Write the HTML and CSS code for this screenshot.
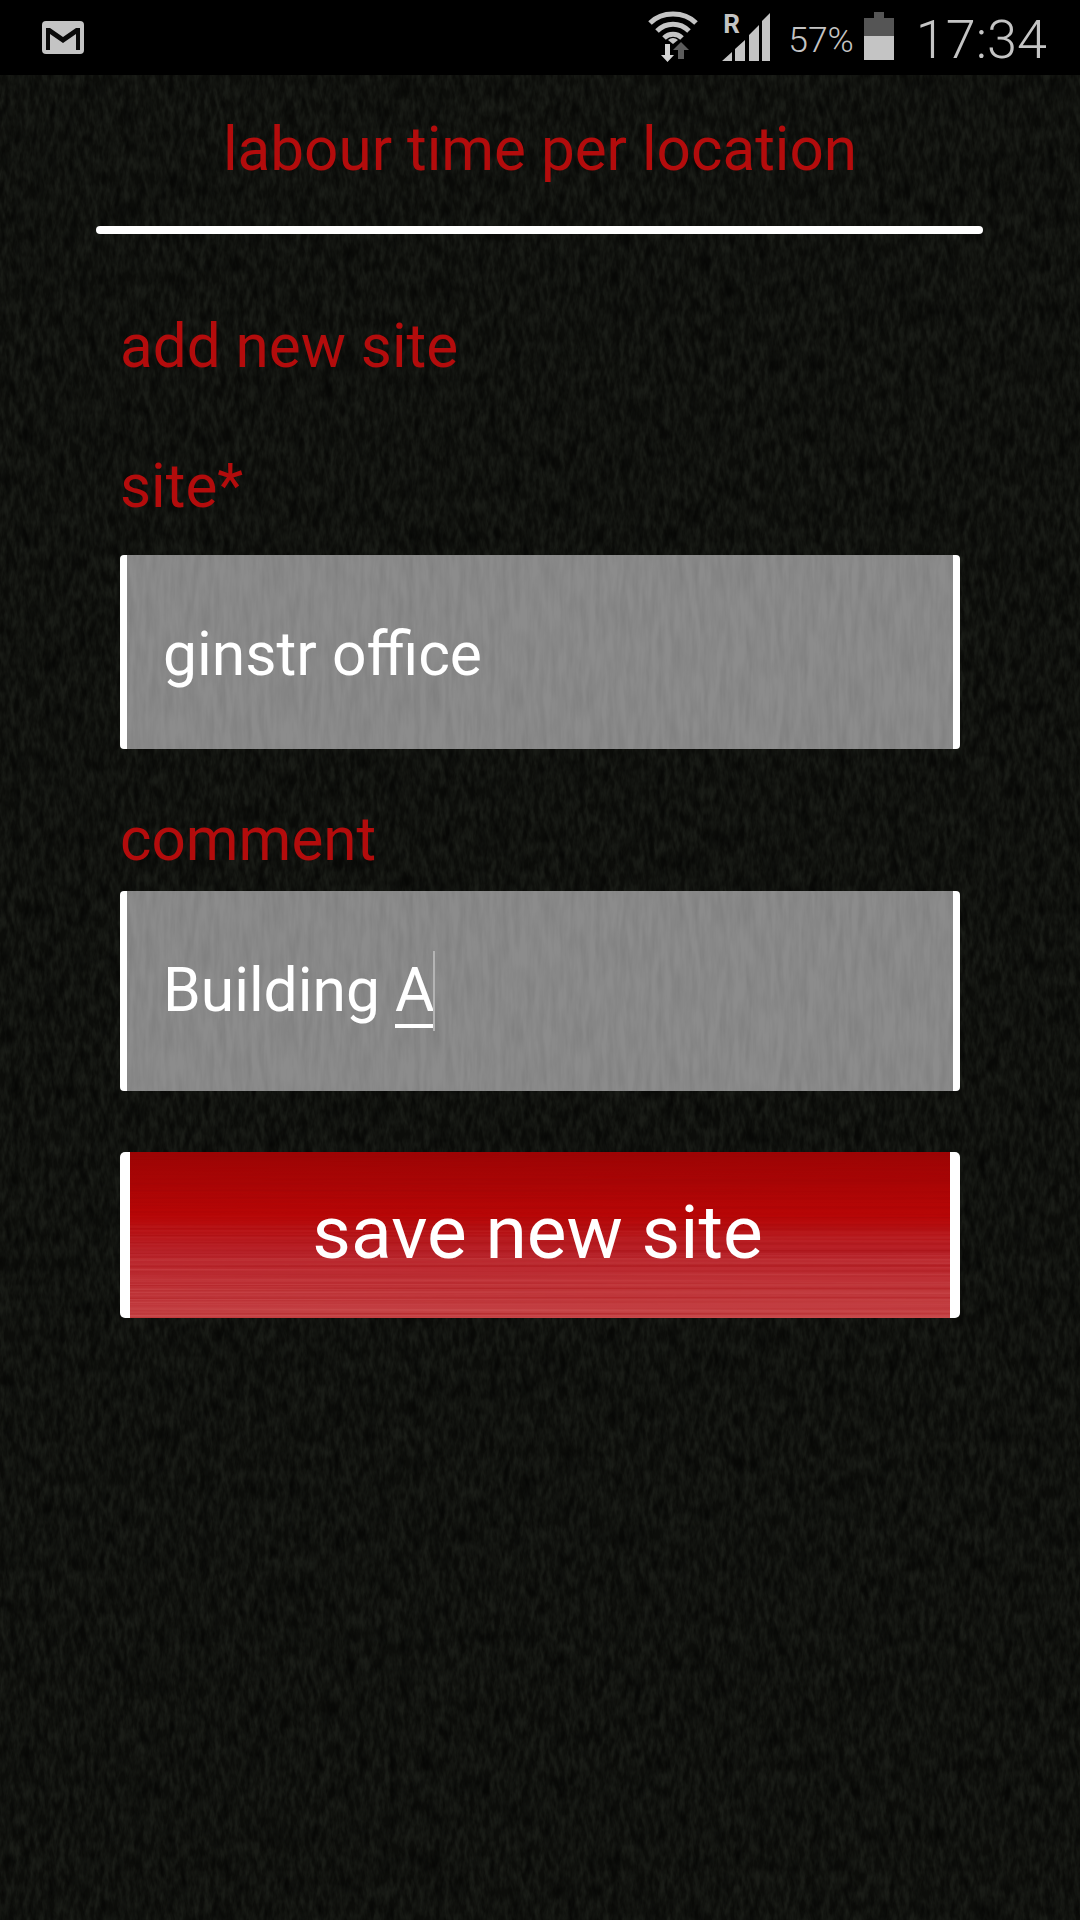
FILE: index.html
```html
<!DOCTYPE html>
<html lang="en">
<head>
<meta charset="utf-8">
<title>labour time per location</title>
<link rel="stylesheet" href="styles.css">
</head>
<body>
<svg class="defs" width="0" height="0" aria-hidden="true">
  <filter id="grain" x="0" y="0" width="100%" height="100%" color-interpolation-filters="sRGB">
    <feTurbulence type="fractalNoise" baseFrequency="0.2 0.07" numOctaves="3" seed="7"/>
    <feColorMatrix type="matrix" values="0 0 0 0 0.10  0 0 0 0 0.11  0 0 0 0 0.09  2.2 0 0 0 -0.7"/>
  </filter>
  <filter id="pits" x="0" y="0" width="100%" height="100%" color-interpolation-filters="sRGB">
    <feTurbulence type="fractalNoise" baseFrequency="0.09 0.04" numOctaves="2" seed="11"/>
    <feColorMatrix type="matrix" values="0 0 0 0 0  0 0 0 0 0  0 0 0 0 0  3 0 0 0 -1.5"/>
  </filter>
  <filter id="fibre" x="0" y="0" width="100%" height="100%" color-interpolation-filters="sRGB">
    <feTurbulence type="fractalNoise" baseFrequency="0.16 0.025" numOctaves="3" seed="3"/>
    <feColorMatrix type="matrix" values="0 0 0 0 0.47  0 0 0 0 0.47  0 0 0 0 0.47  1.0 0 0 0 -0.3"/>
  </filter>
  <filter id="brush" x="0" y="0" width="100%" height="100%" color-interpolation-filters="sRGB">
    <feTurbulence type="fractalNoise" baseFrequency="0.0008 0.42" numOctaves="2" seed="5"/>
    <feColorMatrix type="matrix" values="0 0 0 0 0.62  0 0 0 0 0.02  0 0 0 0 0.03  2.4 0 0 0 -1.0"/>
  </filter>
  <filter id="sheen" x="0" y="0" width="100%" height="100%" color-interpolation-filters="sRGB">
    <feTurbulence type="fractalNoise" baseFrequency="0.0008 0.3" numOctaves="2" seed="19"/>
    <feColorMatrix type="matrix" values="0 0 0 0 0.86  0 0 0 0 0.42  0 0 0 0 0.42  2.6 0 0 0 -1.15"/>
  </filter>
</svg>

<svg class="texture" aria-hidden="true">
  <rect width="100%" height="100%" filter="url(#grain)"/>
  <rect width="100%" height="100%" filter="url(#pits)" opacity="0.45"/>
</svg>

<header class="status">
  <svg class="gmail" viewBox="0 0 42 33" width="42" height="33" aria-hidden="true">
    <rect width="42" height="33" rx="4" fill="#c4c4c4"/>
    <path d="M4 29V7H8L21 16 34 7H38V29H34V13L21 22 8 13V29Z" fill="#0a0a0a"/>
  </svg>
  <div class="status-right">
    <svg class="wifi" viewBox="0 0 50 52" width="50" height="52" aria-hidden="true">
      <g fill="none" stroke="#c4c4c4" stroke-width="5">
        <path d="M2 13C14 1 36 1 48 13"/>
        <path d="M9 21C18 12 32 12 41 21"/>
        <path d="M16 28C21 23 29 23 34 28"/>
      </g>
      <path d="M25 34L20 30Q25 26 30 30Z" fill="#c4c4c4"/>
      <path d="M33 32L41 40H36V49H30V40H25Z" fill="#5c5c5c"/>
      <path d="M17 34H22V45H26L19.500 52 13 45H17Z" fill="#d4d4d4"/>
    </svg>
    <div class="signal">
      <span class="roam">R</span>
      <svg viewBox="0 0 48 48" width="48" height="48" aria-hidden="true">
        <path d="M0 48L10 39V48Z M13 36L23 27V48H13Z M27 22L37 12V48H27Z M40 8L48 0V48H40Z" fill="#c4c4c4"/>
      </svg>
    </div>
    <span class="pct">57%</span>
    <svg class="battery" viewBox="0 0 30 48" width="30" height="48" aria-hidden="true">
      <path d="M10 0H20V6H30V24H0V6H10Z" fill="#555"/>
      <rect y="24" width="30" height="24" fill="#c4c4c4"/>
    </svg>
    <span class="clock">17:34</span>
  </div>
</header>

<main class="screen">
  <h1 class="title">labour time per location</h1>
  <div class="rule"></div>
  <form class="form">
    <h2 class="heading">add new site</h2>
    <label class="label label-site">site*</label>
    <div class="field field-site">
      <svg class="field-tex" aria-hidden="true"><rect width="100%" height="100%" filter="url(#fibre)"/></svg>
      <span class="value">ginstr office</span>
    </div>
    <label class="label label-comment">comment</label>
    <div class="field field-comment">
      <svg class="field-tex" aria-hidden="true"><rect width="100%" height="100%" filter="url(#fibre)"/></svg>
      <span class="value">Building <span class="composing">A</span><span class="caret"></span></span>
    </div>
    <button class="save" type="button">
      <svg class="save-tex" aria-hidden="true"><rect width="100%" height="100%" filter="url(#brush)"/></svg>
      <svg class="save-sheen" aria-hidden="true"><rect width="100%" height="100%" filter="url(#sheen)"/></svg>
      <span class="save-text">save new site</span>
    </button>
  </form>
</main>
</body>
</html>
```
FILE: styles.css
```css
* { box-sizing: border-box; }
html, body { margin: 0; padding: 0; }
body {
  width: 1080px;
  height: 1920px;
  overflow: hidden;
  position: relative;
  background: #0c0d0a;
  font-family: Roboto, "Liberation Sans", sans-serif;
  color: #b30c0c;
}
.defs { position: absolute; }
.texture { position: absolute; left: 0; top: 0; width: 1080px; height: 1920px; }

.status {
  position: relative;
  height: 75px;
  background: #000;
  display: flex;
  justify-content: space-between;
  align-items: flex-start;
  padding: 0 33px 0 42px;
}
.gmail { margin-top: 21px; }
.status-right { display: flex; align-items: flex-start; }
.wifi { margin-top: 10px; }
.signal { position: relative; width: 48px; height: 48px; margin: 13px 0 0 24px; }
.roam {
  position: absolute;
  left: 1px;
  top: -1px;
  font-size: 26px;
  line-height: 24px;
  font-weight: 700;
  color: #c4c4c4;
}
.signal svg { display: block; }
.pct {
  font-size: 35.5px;
  line-height: 40px;
  font-weight: 300;
  color: #c4c4c4;
  margin: 20px 0 0 18px;
}
.battery { margin: 12px 0 0 10px; }
.clock {
  font-size: 54px;
  line-height: 64px;
  font-weight: 300;
  color: #c4c4c4;
  margin: 8px 0 0 22px;
}

.screen { position: relative; display: flex; flex-direction: column; }
.title {
  margin: 37px 0 0;
  height: 76px;
  font-size: 60.2px;
  line-height: 76px;
  font-weight: 400;
  text-align: center;
}
.rule {
  width: 887px;
  height: 8px;
  margin: 38px 0 0 96px;
  background: #fff;
  border-radius: 4px;
}
.form { display: flex; flex-direction: column; padding: 0 120px; }
.heading {
  margin: 75px 0 0;
  font-size: 60.2px;
  line-height: 76px;
  font-weight: 400;
}
.label { display: block; font-size: 60.2px; line-height: 76px; }
.label-site { margin-top: 64px; }
.label-comment { margin-top: 53px; }
.field {
  position: relative;
  display: flex;
  align-items: center;
  background: #8c8c8c;
  border-left: 7.5px solid #fff;
  border-right: 7.5px solid #fff;
  border-radius: 4px;
  padding-left: 36px;
}
.field-site { height: 194px; margin-top: 30px; padding-top: 5px; }
.field-comment { height: 200px; margin-top: 13px; }
.field-tex { position: absolute; left: 0; top: 0; width: 100%; height: 100%; }
.value {
  position: relative;
  font-size: 60.6px;
  line-height: 76px;
  color: #fff;
  white-space: nowrap;
}
.composing { border-bottom: 4px solid #fff; display: inline-block; line-height: 66px; }
.caret {
  position: absolute;
  right: 0;
  top: -2px;
  height: 80px;
  width: 1.5px;
  background: #b4b4b4;
}
.save {
  position: relative;
  height: 166px;
  margin-top: 61px;
  padding: 0 5px 7px 0;
  border: 0;
  border-left: 10px solid #fff;
  border-right: 10px solid #fff;
  border-radius: 5px;
  background: linear-gradient(to bottom, #9c0404 0%, #b80606 38%, #b8232a 60%, #c44245 100%);
  color: #fff;
  font-family: inherit;
  overflow: hidden;
}
.save-tex { position: absolute; left: 0; top: 0; width: 100%; height: 100%; opacity: 0.4; }
.save-sheen {
  position: absolute;
  left: 0;
  top: 0;
  width: 100%;
  height: 100%;
  opacity: 0.35;
  -webkit-mask-image: linear-gradient(to bottom, transparent 35%, #000 70%);
  mask-image: linear-gradient(to bottom, transparent 35%, #000 70%);
}
.save-text { position: relative; font-size: 75px; line-height: 80px; }
```
